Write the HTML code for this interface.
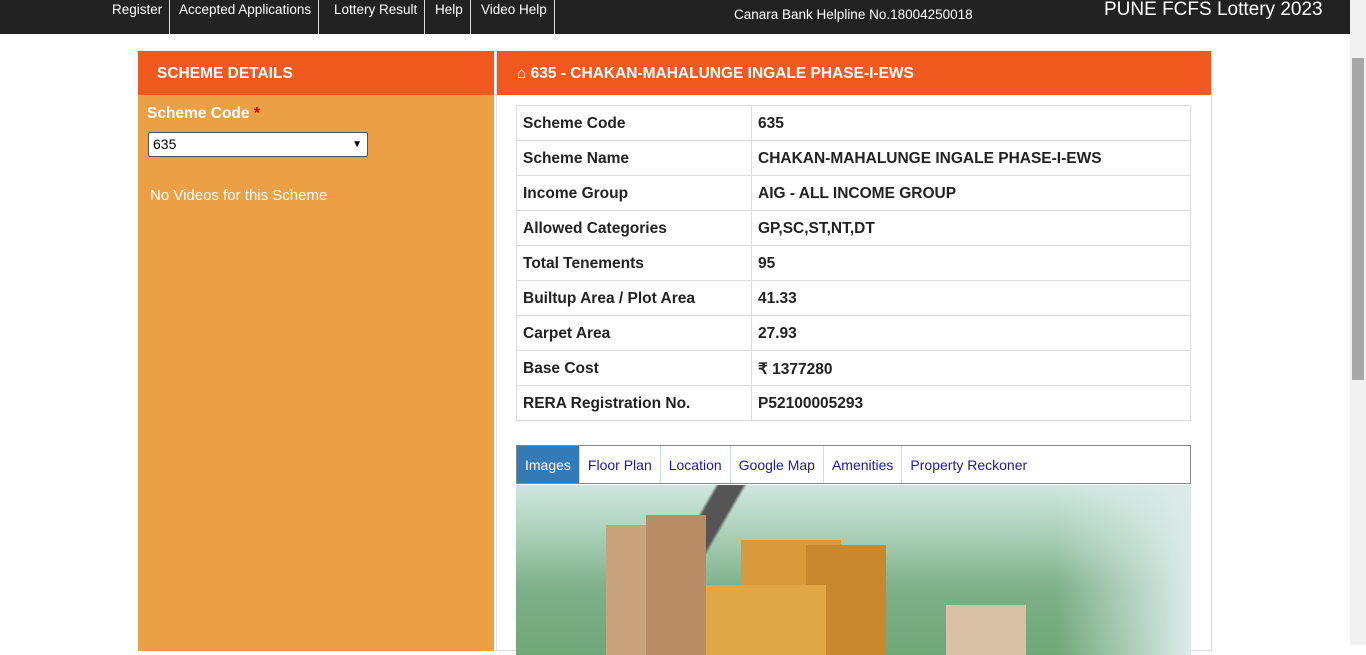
<!DOCTYPE html>
<html><head><meta charset="utf-8"><style>
*{box-sizing:border-box;margin:0;padding:0}
body{width:1366px;height:645px;overflow:hidden;background:#fff;font-family:"Liberation Sans",sans-serif;position:relative}
.top{position:absolute;left:0;top:0;width:1350px;height:34px;background:#222}
.nav a{position:absolute;top:0;height:34px;color:#fff;font-size:13.5px;line-height:19px;text-decoration:none;border-right:1px solid #ddd;padding:0 7px}
.help{position:absolute;left:734px;top:7px;color:#fff;font-size:13.5px}
.title{position:absolute;left:1104px;top:-1px;color:#fff;font-size:19px}
.sb{position:absolute;left:1350px;top:0;width:16px;height:645px;background:#f1f1f1}
.sb div{position:absolute;left:2px;top:58px;width:12px;height:322px;background:#a8a8a8}
.lp{position:absolute;left:138px;top:51px;width:356px;height:600px;background:#eba046}
.hd{height:44px;background:#f05a1e;color:#fff;font-weight:bold;font-size:15.5px;line-height:46px;padding-left:19px}
.rp{position:absolute;left:496px;top:51px;width:716px;height:600px;background:#fff;border:1px solid #e0e0e0;border-top:0}
table{position:absolute;left:19px;top:54px;width:675px;border-collapse:collapse;font-weight:bold;font-size:15.5px;color:#222}
td{border:1px solid #ddd;height:35px;padding:2px 6px 0}
td:first-child{width:235px}
.tabs{position:absolute;left:19px;top:394px;width:675px;height:39px;border:1px solid #888;font-size:14px}
.tabs span{float:left;height:37px;line-height:39px;padding:0 8px;color:#1a1aa6;border-right:1px solid #cde}
.tabs span.a{background:#337ab7;color:#fff}
.img{position:absolute;left:19px;top:434px;width:675px;height:170px;background:linear-gradient(180deg,#cfe6e0 0%,#a9cfb6 30%,#7fb08a 60%,#6fa777 100%);overflow:hidden}
</style></head><body>
<div class="top">
<div class="nav">
<a style="left:105px">Register</a>
<a style="left:172px">Accepted Applications</a>
<a style="left:327px">Lottery Result</a>
<a style="left:428px">Help</a>
<a style="left:474px">Video Help</a>
</div>
<div class="help">Canara Bank Helpline No.18004250018</div>
<div class="title">PUNE FCFS Lottery 2023</div>
</div>
<div class="sb"><div></div></div>
<div class="lp">
<div class="hd">SCHEME DETAILS</div>
<div style="color:#fff;font-weight:bold;font-size:15.5px;padding:10px 9px 0">Scheme Code <span style="color:#c00">*</span></div>
<div style="position:absolute;left:10px;top:81px;width:220px;height:25px;background:#fff;border:1px solid #555;border-radius:2px;font-size:14px;line-height:23px;padding-left:4px">635<span style="position:absolute;right:5px;font-size:10px">&#9660;</span></div>
<div style="position:absolute;left:12px;top:136px;color:#fff;font-size:15px">No Videos for this Scheme</div>
</div>
<div class="rp">
<div class="hd" style="padding-left:20px">&#8962; 635 - CHAKAN-MAHALUNGE INGALE PHASE-I-EWS</div>
<table>
<tr><td>Scheme Code</td><td>635</td></tr>
<tr><td>Scheme Name</td><td>CHAKAN-MAHALUNGE INGALE PHASE-I-EWS</td></tr>
<tr><td>Income Group</td><td>AIG - ALL INCOME GROUP</td></tr>
<tr><td>Allowed Categories</td><td>GP,SC,ST,NT,DT</td></tr>
<tr><td>Total Tenements</td><td>95</td></tr>
<tr><td>Builtup Area / Plot Area</td><td>41.33</td></tr>
<tr><td>Carpet Area</td><td>27.93</td></tr>
<tr><td>Base Cost</td><td>₹ 1377280</td></tr>
<tr><td>RERA Registration No.</td><td>P52100005293</td></tr>
</table>
<div class="tabs"><span class="a">Images</span><span>Floor Plan</span><span>Location</span><span>Google Map</span><span>Amenities</span><span style="border:0">Property Reckoner</span></div>
<div class="img">
<div style="position:absolute;left:20px;top:0;width:300px;height:170px;background:linear-gradient(120deg,transparent 45%,#555 46%,#555 52%,transparent 53%)"></div>
<div style="position:absolute;left:90px;top:40px;width:40px;height:130px;background:#c9a27e"></div>
<div style="position:absolute;left:130px;top:30px;width:60px;height:140px;background:#b98c66"></div>
<div style="position:absolute;left:225px;top:55px;width:100px;height:115px;background:#d89a3a"></div>
<div style="position:absolute;left:290px;top:60px;width:80px;height:110px;background:#c8882e"></div>
<div style="position:absolute;left:190px;top:100px;width:120px;height:70px;background:#e0a845"></div>
<div style="position:absolute;left:430px;top:120px;width:80px;height:50px;background:#d9c1a5"></div>
<div style="position:absolute;left:540px;top:0;width:135px;height:170px;background:linear-gradient(90deg,transparent,#dcebea)"></div>
</div>
</div>
</body></html>
